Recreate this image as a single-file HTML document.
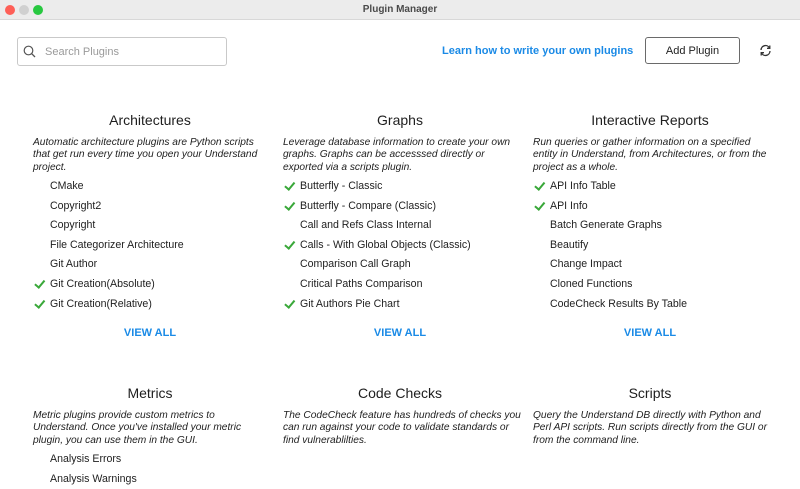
<!DOCTYPE html>
<html><head><style>
*{margin:0;padding:0;box-sizing:border-box}
body{width:800px;height:484px;overflow:hidden;background:#fff;font-family:"Liberation Sans",sans-serif;color:#1e1e1e;position:relative}
.tb{position:absolute;left:0;top:0;width:800px;height:20px;background:#ececec;border-bottom:1px solid #d8d8d8;text-align:center;font-size:10px;font-weight:bold;line-height:19px;color:#4a4a4a}
.dot{position:absolute;top:5px;width:10px;height:10px;border-radius:50%}
.search{position:absolute;left:17px;top:37px;width:210px;height:29px;border:1px solid #c9c9c9;border-radius:3px;font-size:11px;color:#9a9a9a;line-height:28px;padding-left:27px}
.learn{position:absolute;left:442px;top:45px;font-size:11px;font-weight:bold;color:#1a8ae6}
.add{position:absolute;left:645px;top:37px;width:95px;height:27px;border:1px solid #6a6a6a;border-radius:3px;text-align:center;line-height:26px;font-size:11px}
.col{position:absolute;width:234px}
.col h2{font-size:14px;font-weight:normal;text-align:center;height:20px;line-height:20px}
.col p{font-size:10.2px;font-style:italic;line-height:12.3px;margin-top:7px;height:40px;white-space:nowrap}
.it{font-size:10.6px;height:19.6px;line-height:19.6px;padding-left:17px;position:relative}
.it.c:before{content:"";position:absolute;left:4px;top:3px;width:3.5px;height:7.5px;border:solid #3aa83a;border-width:0 2px 2px 0;transform:rotate(40deg)}
.va{font-size:11px;font-weight:bold;color:#1a8ae6;text-align:center;margin-top:13px}
</style></head><body>
<div class="tb">Plugin Manager
<div class="dot" style="left:5px;background:#fe5f57"></div>
<div class="dot" style="left:19px;background:#d0d0d0"></div>
<div class="dot" style="left:33px;background:#28c840"></div></div>
<div class="search"><svg style="position:absolute;left:5px;top:7px" width="13" height="13" viewBox="0 0 13 13"><circle cx="5.5" cy="5.5" r="4.3" fill="none" stroke="#555" stroke-width="1.2"/><path d="M8.6 8.6L12 12" stroke="#555" stroke-width="1.3"/></svg>Search Plugins</div>
<div class="learn">Learn how to write your own plugins</div>
<div class="add">Add Plugin</div>
<svg style="position:absolute;left:759px;top:44px" width="13" height="13" viewBox="0 0 13 13" fill="none" stroke="#333" stroke-width="1.3"><path d="M2 6A4.5 4.5 0 0 1 10.5 4"/><path d="M11 7A4.5 4.5 0 0 1 2.5 9"/><path d="M10.8 1.5V4.3H8"/><path d="M2.2 11.5V8.7H5"/></svg>

<div class="col" style="left:33px;top:110px"><h2>Architectures</h2>
<p>Automatic architecture plugins are Python scripts<br>that get run every time you open your Understand<br>project.</p>
<div class="it">CMake</div><div class="it">Copyright2</div><div class="it">Copyright</div><div class="it">File Categorizer Architecture</div><div class="it">Git Author</div><div class="it c">Git Creation(Absolute)</div><div class="it c">Git Creation(Relative)</div>
<div class="va">VIEW ALL</div></div>

<div class="col" style="left:283px;top:110px"><h2>Graphs</h2>
<p>Leverage database information to create your own<br>graphs. Graphs can be accesssed directly or<br>exported via a scripts plugin.</p>
<div class="it c">Butterfly - Classic</div><div class="it c">Butterfly - Compare (Classic)</div><div class="it">Call and Refs Class Internal</div><div class="it c">Calls - With Global Objects (Classic)</div><div class="it">Comparison Call Graph</div><div class="it">Critical Paths Comparison</div><div class="it c">Git Authors Pie Chart</div>
<div class="va">VIEW ALL</div></div>

<div class="col" style="left:533px;top:110px"><h2>Interactive Reports</h2>
<p>Run queries or gather information on a specified<br>entity in Understand, from Architectures, or from the<br>project as a whole.</p>
<div class="it c">API Info Table</div><div class="it c">API Info</div><div class="it">Batch Generate Graphs</div><div class="it">Beautify</div><div class="it">Change Impact</div><div class="it">Cloned Functions</div><div class="it">CodeCheck Results By Table</div>
<div class="va">VIEW ALL</div></div>

<div class="col" style="left:33px;top:383px"><h2>Metrics</h2>
<p>Metric plugins provide custom metrics to<br>Understand. Once you've installed your metric<br>plugin, you can use them in the GUI.</p>
<div class="it">Analysis Errors</div><div class="it">Analysis Warnings</div></div>

<div class="col" style="left:283px;top:383px"><h2>Code Checks</h2>
<p>The CodeCheck feature has hundreds of checks you<br>can run against your code to validate standards or<br>find vulnerablilties.</p></div>

<div class="col" style="left:533px;top:383px"><h2>Scripts</h2>
<p>Query the Understand DB directly with Python and<br>Perl API scripts. Run scripts directly from the GUI or<br>from the command line.</p></div>
</body></html>
